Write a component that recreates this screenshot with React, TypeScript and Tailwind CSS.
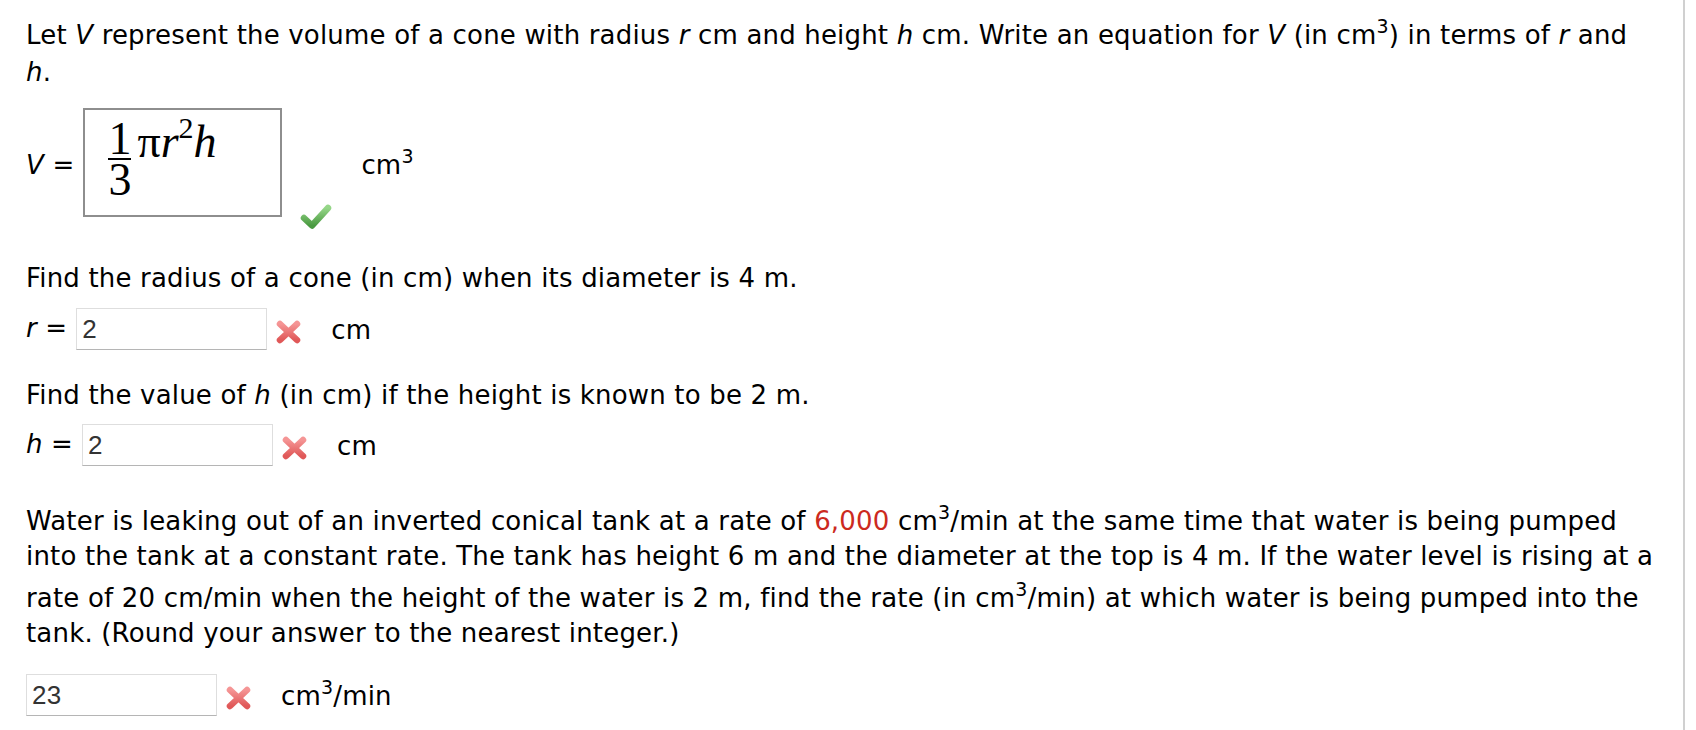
import React from "react";

const sans = { fontFamily: '"DejaVu Sans", Verdana, sans-serif' };
const serif = { fontFamily: '"Liberation Serif", "Times New Roman", serif' };

function Sup({ children }: { children: React.ReactNode }) {
  return <span className="relative -top-[11px] text-[19px] leading-none">{children}</span>;
}

function Wrong() {
  return (
    <svg width="27" height="26" viewBox="0 0 27 26" className="block shrink-0">
      <defs>
        <linearGradient id="xg" x1="0" y1="0" x2="0" y2="1">
          <stop offset="0" stopColor="#f59595" />
          <stop offset="1" stopColor="#e05858" />
        </linearGradient>
      </defs>
      <path
        d="M5 5 L22 21 M22 5 L5 21"
        stroke="url(#xg)"
        strokeWidth="6.5"
        strokeLinecap="round"
        fill="none"
      />
    </svg>
  );
}

function Right() {
  return (
    <svg width="32" height="27" viewBox="0 0 32 27" className="block shrink-0">
      <defs>
        <linearGradient id="cg" x1="0" y1="0" x2="0" y2="1">
          <stop offset="0" stopColor="#95d688" />
          <stop offset="1" stopColor="#4a9a41" />
        </linearGradient>
      </defs>
      <path
        d="M4 15 L12 22.5 L28 5"
        stroke="url(#cg)"
        strokeWidth="6.5"
        strokeLinecap="round"
        strokeLinejoin="round"
        fill="none"
      />
    </svg>
  );
}

function AnswerBox({ value }: { value: string }) {
  return (
    <input
      readOnly
      value={value}
      className="block h-[42px] w-[191px] shrink-0 border border-[#dedede] border-b-[#b5b5b5] bg-white pl-[5px] text-[26px] text-[#333] outline-none"
      style={{ fontFamily: '"Liberation Sans", Arial, sans-serif' }}
    />
  );
}

function AnswerRow({
  label,
  value,
  unit,
}: {
  label?: React.ReactNode;
  value: string;
  unit: React.ReactNode;
}) {
  return (
    <div className="flex h-[42px] items-start">
      {label && <span className="mr-[9px] mt-[3px] whitespace-nowrap">{label}</span>}
      <AnswerBox value={value} />
      <span className="ml-[8px] mt-[11px]">
        <Wrong />
      </span>
      <span className="ml-[29px] mt-[5px] whitespace-nowrap">{unit}</span>
    </div>
  );
}

export default function App() {
  return (
    <div
      className="h-[730px] w-[1685px] border-r-2 border-[#d0d0d0] bg-white pl-[26px] pt-[17px] text-[26px] leading-[35px] tracking-[0.18px] text-black"
      style={sans}
    >
      <p className="whitespace-nowrap leading-[37px]">
        Let <i>V</i> represent the volume of a cone with radius <i>r</i> cm and height <i>h</i> cm.
        Write an equation for <i>V</i> (in cm<Sup>3</Sup>) in terms of <i>r</i> and
        <br />
        <i>h</i>.
      </p>

      <div className="mt-[17px] flex h-[122px] items-start">
        <span className="mt-[40px] whitespace-nowrap">
          <i>V</i> =
        </span>
        <div
          className="ml-[9px] h-[109px] w-[199px] shrink-0 border-2 border-[#8e8e8e] pl-[22px] pt-[9px] tracking-normal"
          style={serif}
        >
          <div className="flex items-start">
            <span className="mt-[4px] flex flex-col px-[1px] text-center text-[46px] leading-[31px]">
              <span>1</span>
              <span className="mt-[4px] h-[2px] bg-black" />
              <span className="mt-[4px]">3</span>
            </span>
            <span className="ml-[5px] whitespace-nowrap text-[46px] leading-[46px]">
              π<i>r</i>
              <span className="relative -top-[19px] text-[30px] leading-none">2</span>
              <i>h</i>
            </span>
          </div>
        </div>
        <span className="ml-[18px] mt-[95px]">
          <Right />
        </span>
        <span className="ml-[29px] mt-[40px] whitespace-nowrap">
          cm<Sup>3</Sup>
        </span>
      </div>

      <p className="mt-[31px]">Find the radius of a cone (in cm) when its diameter is 4 m.</p>
      <div className="mt-[12px]">
        <AnswerRow label={<><i>r</i> =</>} value="2" unit="cm" />
      </div>

      <p className="mt-[28px]">
        Find the value of <i>h</i> (in cm) if the height is known to be 2 m.
      </p>
      <div className="mt-[11px]">
        <AnswerRow label={<><i>h</i> =</>} value="2" unit="cm" />
      </div>

      <div className="mt-[38px] whitespace-nowrap">
        <p>
          Water is leaking out of an inverted conical tank at a rate of{" "}
          <span className="text-[#cc2a1e]">6,000</span> cm<Sup>3</Sup>/min at the same time that
          water is being pumped
        </p>
        <p>
          into the tank at a constant rate. The tank has height 6 m and the diameter at the top is
          4 m. If the water level is rising at a
        </p>
        <p className="pt-[7px]">
          rate of 20 cm/min when the height of the water is 2 m, find the rate (in cm<Sup>3</Sup>
          /min) at which water is being pumped into the
        </p>
        <p>tank. (Round your answer to the nearest integer.)</p>
      </div>
      <div className="mt-[23px]">
        <AnswerRow
          value="23"
          unit={
            <>
              cm<Sup>3</Sup>/min
            </>
          }
        />
      </div>
    </div>
  );
}
